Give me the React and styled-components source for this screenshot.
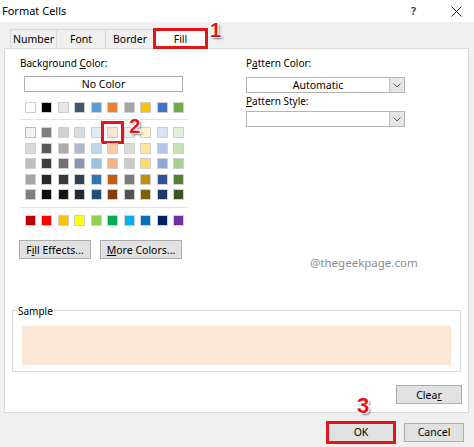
import React from "react";
import styled, { createGlobalStyle } from "styled-components";

const THEME = ["#FFFFFF", "#000000", "#E7E6E6", "#44546A", "#5B9BD5", "#ED7D31", "#A5A5A5", "#FFC000", "#4472C4", "#70AD47"];

const TINTS = [
  "#F2F2F2", "#7F7F7F", "#D0CECE", "#D6DCE4", "#DEEBF6", "#FBE5D5", "#EDEDED", "#FFF2CC", "#D9E2F3", "#E2EFD9",
  "#D8D8D8", "#595959", "#AEABAB", "#ADB9CA", "#BDD7EE", "#F7CBAC", "#DBDBDB", "#FEE599", "#B4C6E7", "#C5E0B3",
  "#BFBFBF", "#3F3F3F", "#757070", "#8496B0", "#9CC3E5", "#F4B183", "#C9C9C9", "#FFD965", "#8EAADB", "#A8D08D",
  "#A5A5A5", "#262626", "#3A3838", "#323F4F", "#2E75B5", "#C55A11", "#7B7B7B", "#BF9000", "#2F5496", "#538135",
  "#7F7F7F", "#0C0C0C", "#171616", "#222A35", "#1E4E79", "#833C0B", "#525252", "#7F6000", "#1F3864", "#375623",
];

const STANDARD = ["#C00000", "#FF0000", "#FFC000", "#FFFF00", "#92D050", "#00B050", "#00B0F0", "#0070C0", "#002060", "#7030A0"];

const SELECTED = 5;

const Chevron = () => (
  <svg width="8" height="5" viewBox="0 0 8 5">
    <path d="M0.5 0.5 L4 4 L7.5 0.5" fill="none" stroke="#606060" strokeWidth="1" />
  </svg>
);

const CloseIcon = () => (
  <svg width="11" height="11" viewBox="0 0 11 11">
    <path d="M0.5 0.5 L10.5 10.5 M10.5 0.5 L0.5 10.5" stroke="#222" strokeWidth="1" />
  </svg>
);

const App = () => {
  return (
    <>
      <GlobalStyle />
      <Dialog>
        <TitleBar>
          <Title>Format Cells</Title>
          <Help>?</Help>
          <CloseBtn>
            <CloseIcon />
          </CloseBtn>
        </TitleBar>

        <TabStrip>
          <Tab $w={47}>Number</Tab>
          <Tab $w={49}>Font</Tab>
          <Tab $w={49}>Border</Tab>
          <ActiveTab>
            Fill
            <Badge $left="calc(100% + 5px)" $top="-11px">1</Badge>
          </ActiveTab>
        </TabStrip>

        <Panel>
          <TopSection>
            <LeftCol>
              <Label>
                Background <u>C</u>olor:
              </Label>
              <NoColorButton>No Color</NoColorButton>
              <SwatchGrid $mt={10}>
                {THEME.map((c, i) => (
                  <Swatch key={i} $color={c} />
                ))}
              </SwatchGrid>
              <Separator $mt={6} />
              <SwatchGrid $mt={7} $rowGap={4.5}>
                {TINTS.map((c, i) => (
                  <Swatch key={i} $color={c} $focus={i === 0} $marked={i === SELECTED}>
                    {i === SELECTED && (
                      <Badge $left="21px" $top="-12px">2</Badge>
                    )}
                  </Swatch>
                ))}
              </SwatchGrid>
              <Separator $mt={7} />
              <SwatchGrid $mt={7}>
                {STANDARD.map((c, i) => (
                  <Swatch key={i} $color={c} />
                ))}
              </SwatchGrid>
              <ButtonRow>
                <Button $w={72}>
                  F<u>i</u>ll Effects...
                </Button>
                <Button $w={82}>
                  <u>M</u>ore Colors...
                </Button>
              </ButtonRow>
            </LeftCol>

            <RightCol>
              <Label>
                P<u>a</u>ttern Color:
              </Label>
              <Select $mt={7}>
                <SelectValue>Automatic</SelectValue>
                <SelectArrow>
                  <Chevron />
                </SelectArrow>
              </Select>
              <Label $mt={1}>
                <u>P</u>attern Style:
              </Label>
              <Select $mt={3}>
                <SelectValue />
                <SelectArrow>
                  <Chevron />
                </SelectArrow>
              </Select>
              <Watermark>@thegeekpage.com</Watermark>
            </RightCol>
          </TopSection>

          <GroupBox>
            <GroupTitle>Sample</GroupTitle>
            <SampleFill $color={TINTS[SELECTED]} />
          </GroupBox>

          <ClearRow>
            <Button $w={66}>
              Clea<u>r</u>
            </Button>
          </ClearRow>
        </Panel>

        <Footer>
          <RedFrame>
            <Button $w={64} $h={17} $borderless>
              OK
            </Button>
            <Badge $left="28px" $top="-28px" $size={22}>3</Badge>
          </RedFrame>
          <Button $w={60}>Cancel</Button>
        </Footer>
      </Dialog>
    </>
  );
};

export default App;

// Styled Components

const GlobalStyle = createGlobalStyle`
  html, body {
    margin: 0;
    padding: 0;
    background: #ffffff;
  }
  body {
    font-family: "Noto Sans", "Open Sans", sans-serif;
    font-size: 10px;
    color: #000;
  }
  u {
    text-decoration: underline;
    text-underline-offset: 1px;
  }
`;

const Dialog = styled.div`
  width: 474px;
  height: 447px;
  background: #f0f0f0;
  display: flex;
  flex-direction: column;
  overflow: hidden;
`;

const TitleBar = styled.div`
  height: 22px;
  background: #ffffff;
  display: flex;
  align-items: center;
  padding: 0 12px 0 2px;
`;

const Title = styled.div`
  flex: 1;
  font-size: 11px;
  line-height: 22px;
`;

const Help = styled.div`
  font-size: 11px;
  font-weight: 600;
  color: #333;
  margin-right: 35px;
  margin-top: -2px;
`;

const CloseBtn = styled.div`
  display: flex;
  align-items: center;
`;

const TabStrip = styled.div`
  height: 26px;
  display: flex;
  align-items: flex-end;
  padding-left: 10px;
  position: relative;
  z-index: 1;
`;

const Tab = styled.div`
  width: ${(p) => p.$w}px;
  height: 19px;
  box-sizing: border-box;
  border: 1px solid #d9d9d9;
  border-bottom: none;
  border-left: none;
  background: #f0f0f0;
  display: flex;
  align-items: center;
  justify-content: center;
  font-size: 10.5px;
  &:first-child {
    border-left: 1px solid #d9d9d9;
  }
`;

const ActiveTab = styled.div`
  position: relative;
  width: 55px;
  height: 21px;
  margin-left: -2px;
  margin-bottom: -1px;
  box-sizing: border-box;
  border: 3px solid #e3141b;
  background: #ffffff;
  display: flex;
  align-items: center;
  justify-content: center;
  font-size: 10.5px;
`;

const Badge = styled.span`
  position: absolute;
  left: ${(p) => p.$left};
  top: ${(p) => p.$top};
  font-family: "Liberation Sans", Arial, sans-serif;
  font-weight: bold;
  font-size: ${(p) => p.$size || 20}px;
  line-height: 20px;
  color: #e3141b;
  text-shadow: -1px -1px 0 #fff, 1px -1px 0 #fff, -1px 1px 0 #fff, 1px 1px 0 #fff,
    2px 2px 2px rgba(0, 0, 0, 0.45);
  pointer-events: none;
  z-index: 2;
`;

const Panel = styled.div`
  height: 365px;
  box-sizing: border-box;
  margin: 0 5px 0 4px;
  background: #ffffff;
  border: 1px solid #d9d9d9;
  display: flex;
  flex-direction: column;
`;

const TopSection = styled.div`
  display: flex;
  padding: 7px 0 0 15px;
`;

const LeftCol = styled.div`
  width: 168px;
  display: flex;
  flex-direction: column;
`;

const RightCol = styled.div`
  margin-left: 58px;
  width: 160px;
  display: flex;
  flex-direction: column;
`;

const Label = styled.div`
  font-size: 10px;
  line-height: 14px;
  margin-top: ${(p) => p.$mt || 0}px;
  white-space: nowrap;
`;

const NoColorButton = styled.div`
  margin: 6px 0 0 4px;
  width: 159px;
  height: 16px;
  box-sizing: border-box;
  border: 1px solid #adadad;
  background: #ffffff;
  display: flex;
  align-items: center;
  justify-content: center;
  font-size: 10.5px;
`;

const SwatchGrid = styled.div`
  margin: ${(p) => p.$mt}px 0 0 5px;
  width: 159px;
  display: grid;
  grid-template-columns: repeat(10, 11px);
  grid-auto-rows: 11px;
  justify-content: space-between;
  row-gap: ${(p) => p.$rowGap || 0}px;
`;

const Swatch = styled.div`
  position: relative;
  width: 11px;
  height: 11px;
  box-sizing: border-box;
  border: 1px solid ${(p) => (p.$focus ? "#9fbfe4" : "#cfcfcf")};
  background: ${(p) => p.$color};
  outline: ${(p) => (p.$marked ? "3px solid #e3141b" : "none")};
  outline-offset: 3px;
`;

const Separator = styled.div`
  margin-top: ${(p) => p.$mt}px;
  height: 1px;
  width: 168px;
  background: #e3e3e3;
`;

const ButtonRow = styled.div`
  display: flex;
  gap: 9px;
  margin-top: 14px;
  margin-left: -1px;
`;

const Button = styled.div`
  width: ${(p) => p.$w}px;
  height: ${(p) => p.$h || 19}px;
  box-sizing: border-box;
  border: ${(p) => (p.$borderless ? "none" : "1px solid #adadad")};
  background: #e1e1e1;
  display: flex;
  align-items: center;
  justify-content: center;
  font-size: 10.5px;
  white-space: nowrap;
`;

const Select = styled.div`
  margin-top: ${(p) => p.$mt}px;
  width: 159px;
  height: 16px;
  box-sizing: border-box;
  border: 1px solid #b4b4b4;
  background: #ffffff;
  display: flex;
`;

const SelectValue = styled.div`
  flex: 1;
  display: flex;
  align-items: center;
  justify-content: center;
  font-size: 10.5px;
`;

const SelectArrow = styled.div`
  width: 14px;
  background: #e6e6e6;
  border-left: 1px solid #c4c4c4;
  display: flex;
  align-items: center;
  justify-content: center;
`;

const Watermark = styled.div`
  margin: 128px 0 0 64px;
  font-size: 11.5px;
  color: #8c8c8c;
  white-space: nowrap;
`;

const GroupBox = styled.div`
  margin: auto 7px 0 7px;
  border: 1px solid #dcdcdc;
  padding: 0 9px 6px 9px;
`;

const GroupTitle = styled.div`
  width: fit-content;
  margin: -7px 0 0 -5px;
  padding: 0 1px;
  background: #ffffff;
  font-size: 10px;
  line-height: 14px;
`;

const SampleFill = styled.div`
  margin-top: 8px;
  height: 39px;
  background: ${(p) => p.$color};
`;

const ClearRow = styled.div`
  display: flex;
  justify-content: flex-end;
  margin: 13px 6px 8px 0;
`;

const Footer = styled.div`
  flex: 1;
  display: flex;
  align-items: center;
  justify-content: flex-end;
  gap: 8px;
  padding: 4px 10px 0 0;
`;

const RedFrame = styled.div`
  position: relative;
  border: 3px solid #e3141b;
  background: #e1e1e1;
`;
